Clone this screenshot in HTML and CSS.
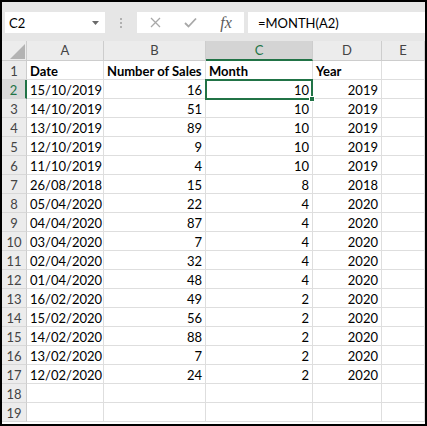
FILE: index.html
```html
<!DOCTYPE html>
<html>
<head>
<meta charset="utf-8">
<link rel="stylesheet" href="styles.css">
</head>
<body>
<div class="frame">
  <div class="toolbar">
    <div class="namebox">
      <span class="nb-text">C2</span>
      <svg class="nb-arrow" width="7" height="4" viewBox="0 0 7 4"><polygon points="0,0 7,0 3.5,4" fill="#6a6a6a"/></svg>
    </div>
    <div class="dots"><span></span><span></span><span></span></div>
    <div class="fxbox">
      <div class="fxbtn">
        <svg width="11" height="11" viewBox="0 0 11 11"><path d="M1 1 L10 10 M10 1 L1 10" stroke="#a8a8a8" stroke-width="1.3" fill="none"/></svg>
      </div>
      <div class="fxbtn">
        <svg width="13" height="11" viewBox="0 0 13 11"><path d="M1 6 L4.5 9.5 L12 1.5" stroke="#a8a8a8" stroke-width="1.8" fill="none"/></svg>
      </div>
      <div class="fxbtn"><span class="fx">fx</span></div>
    </div>
    <div class="formula">=MONTH(A2)</div>
  </div>

  <div class="sheet">
    <div class="row head">
      <div class="corner"><svg width="15" height="15" viewBox="0 0 15 15"><polygon points="15,0 15,15 0,15" fill="#b3b3b3"/></svg></div>
      <div class="ch">A</div><div class="ch">B</div><div class="ch csel">C</div><div class="ch">D</div><div class="ch">E</div>
    </div>
    <div class="row"><div class="rh">1</div><div class="c b">Date</div><div class="c b">Number of Sales</div><div class="c b">Month</div><div class="c b">Year</div><div class="c"></div></div>
    <div class="row"><div class="rh rsel">2</div><div class="c">15/10/2019</div><div class="c n">16</div><div class="c n sel">10<span class="selbox"><span class="handle"></span></span></div><div class="c n">2019</div><div class="c"></div></div>
    <div class="row"><div class="rh">3</div><div class="c">14/10/2019</div><div class="c n">51</div><div class="c n">10</div><div class="c n">2019</div><div class="c"></div></div>
    <div class="row"><div class="rh">4</div><div class="c">13/10/2019</div><div class="c n">89</div><div class="c n">10</div><div class="c n">2019</div><div class="c"></div></div>
    <div class="row"><div class="rh">5</div><div class="c">12/10/2019</div><div class="c n">9</div><div class="c n">10</div><div class="c n">2019</div><div class="c"></div></div>
    <div class="row"><div class="rh">6</div><div class="c">11/10/2019</div><div class="c n">4</div><div class="c n">10</div><div class="c n">2019</div><div class="c"></div></div>
    <div class="row"><div class="rh">7</div><div class="c">26/08/2018</div><div class="c n">15</div><div class="c n">8</div><div class="c n">2018</div><div class="c"></div></div>
    <div class="row"><div class="rh">8</div><div class="c">05/04/2020</div><div class="c n">22</div><div class="c n">4</div><div class="c n">2020</div><div class="c"></div></div>
    <div class="row"><div class="rh">9</div><div class="c">04/04/2020</div><div class="c n">87</div><div class="c n">4</div><div class="c n">2020</div><div class="c"></div></div>
    <div class="row"><div class="rh">10</div><div class="c">03/04/2020</div><div class="c n">7</div><div class="c n">4</div><div class="c n">2020</div><div class="c"></div></div>
    <div class="row"><div class="rh">11</div><div class="c">02/04/2020</div><div class="c n">32</div><div class="c n">4</div><div class="c n">2020</div><div class="c"></div></div>
    <div class="row"><div class="rh">12</div><div class="c">01/04/2020</div><div class="c n">48</div><div class="c n">4</div><div class="c n">2020</div><div class="c"></div></div>
    <div class="row"><div class="rh">13</div><div class="c">16/02/2020</div><div class="c n">49</div><div class="c n">2</div><div class="c n">2020</div><div class="c"></div></div>
    <div class="row"><div class="rh">14</div><div class="c">15/02/2020</div><div class="c n">56</div><div class="c n">2</div><div class="c n">2020</div><div class="c"></div></div>
    <div class="row"><div class="rh">15</div><div class="c">14/02/2020</div><div class="c n">88</div><div class="c n">2</div><div class="c n">2020</div><div class="c"></div></div>
    <div class="row"><div class="rh">16</div><div class="c">13/02/2020</div><div class="c n">7</div><div class="c n">2</div><div class="c n">2020</div><div class="c"></div></div>
    <div class="row"><div class="rh">17</div><div class="c">12/02/2020</div><div class="c n">24</div><div class="c n">2</div><div class="c n">2020</div><div class="c"></div></div>
    <div class="row"><div class="rh">18</div><div class="c"></div><div class="c"></div><div class="c"></div><div class="c"></div><div class="c"></div></div>
    <div class="row"><div class="rh">19</div><div class="c"></div><div class="c"></div><div class="c"></div><div class="c"></div><div class="c"></div></div>
  </div>
</div>
</body>
</html>
```
FILE: styles.css
```css
* { box-sizing: border-box; }
html, body { margin: 0; padding: 0; background: #000; }
body { font-family: "Lato", "Liberation Sans", sans-serif; font-size: 13px; color: #000; }

.frame {
  width: 427px;
  height: 426px;
  border: 2px solid #000;
  background: #fff;
  overflow: hidden;
}

/* toolbar / formula bar */
.toolbar {
  height: 39px;
  background: #e6e6e6;
  display: flex;
  align-items: flex-start;
  padding-top: 10px;
  padding-left: 3px;
}
.namebox {
  width: 100px;
  height: 21px;
  background: #fff;
  display: flex;
  align-items: center;
  justify-content: space-between;
  padding: 0 6px 0 4px;
  font-size: 13px;
}
.nb-arrow { display: block; }
.dots {
  width: 32px;
  height: 21px;
  display: flex;
  flex-direction: column;
  align-items: center;
  justify-content: center;
  gap: 2px;
}
.dots span {
  width: 2px;
  height: 2px;
  background: #b0b0b0;
  display: block;
}
.fxbox {
  width: 107px;
  height: 21px;
  background: #fff;
  display: flex;
  padding-left: 1px;
}
.fxbtn {
  width: 35px;
  display: flex;
  align-items: center;
  justify-content: center;
}
.fxbtn svg { display: block; }
.fx {
  font-family: "Liberation Serif", serif;
  font-style: italic;
  font-size: 16px;
  color: #5a5a5a;
  line-height: 1;
  margin-left: 1px;
}
.formula {
  flex: 1;
  height: 21px;
  margin-left: 4px;
  background: #fff;
  display: flex;
  align-items: center;
  padding-left: 10px;
  font-size: 13px;
}

/* sheet grid */
.row {
  display: grid;
  grid-template-columns: 25px 77px 102px 107px 69px 1fr;
  height: 19px;
}
.row.head { height: 20px; }

.corner, .ch, .rh {
  background: #ececec;
  color: #444;
  border-right: 1px solid #cdcdcd;
  border-bottom: 1px solid #cdcdcd;
}
.corner {
  display: flex;
  align-items: flex-end;
  justify-content: flex-end;
  padding: 0 1px 1px 0;
}
.corner svg { display: block; }
.ch {
  display: flex;
  align-items: flex-end;
  justify-content: center;
  line-height: 16px;
  font-size: 13px;
  padding-bottom: 2px;
}
.ch.csel {
  background: #d4d4d4;
  color: #217346;
  border-bottom: 2px solid #217346;
  padding-bottom: 1px;
}
.rh {
  display: flex;
  align-items: flex-end;
  justify-content: center;
  line-height: 16px;
  font-size: 13px;
  border-bottom-color: #d8d8d8;
}
.rh.rsel {
  background: #d9d9d9;
  color: #217346;
  border-right: 2px solid #217346;
}

.c {
  border-right: 1px solid #dedede;
  border-bottom: 1px solid #dedede;
  display: flex;
  align-items: flex-end;
  padding: 0 3px;
  line-height: 16px;
  white-space: nowrap;
  overflow: hidden;
}
.c.n { justify-content: flex-end; }
.c.b { font-weight: 700; }

.c.sel {
  position: relative;
  overflow: visible;
}
.selbox {
  position: absolute;
  top: -1px;
  left: -1px;
  right: -1px;
  bottom: -2px;
  border: 2px solid #217346;
  z-index: 2;
}
.handle {
  position: absolute;
  right: -4px;
  bottom: -4px;
  width: 6px;
  height: 6px;
  background: #217346;
  border: 1px solid #fff;
}
```
